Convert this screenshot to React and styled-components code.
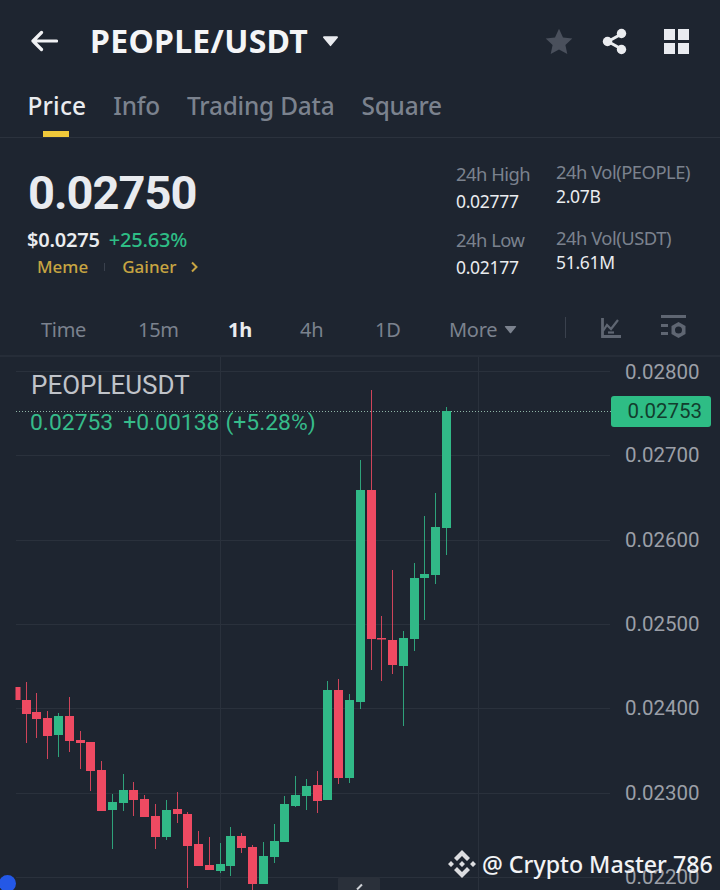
import React from 'react';
import styled, { createGlobalStyle } from 'styled-components';

const Global = createGlobalStyle`
  html, body { margin: 0; padding: 0; background: #1e2530; }
  #root { width: 720px; height: 890px; overflow: hidden; }
`;
const SANS = `"Noto Sans", Roboto, "Liberation Sans", sans-serif`;
const NUM = `Roboto, "Liberation Sans", sans-serif`;

const Page = styled.div`
  width: 720px; height: 890px; background: #1e2530; display: flex; flex-direction: column;
  overflow: hidden; font-family: ${SANS}; color: #eaecef;
`;
const Header = styled.header`
  display: flex; align-items: center; height: 82px; padding: 0 31px 0 31px; box-sizing: border-box;
`;
const Title = styled.h1`
  margin: 0 0 0 32px; font: 700 32px/1 ${SANS}; letter-spacing: 0.3px; color: #f4f5f7; white-space: nowrap;
`;
const HeaderActions = styled.div`
  margin-left: auto; display: flex; align-items: center;
`;
const StarSlot = styled.span`
  display: flex; margin-right: 29px;
`;
const ShareSlot = styled.span`
  display: flex; margin-right: 36px;
`;
const Tabs = styled.nav`
  display: flex; height: 56px; padding-left: 27.5px; gap: 27px; border-bottom: 1px solid #2b323d; box-sizing: border-box;
`;
const Tab = styled.div`
  position: relative; font: 500 24.4px/48px ${SANS};
  letter-spacing: ${p => (p.$active ? '0.2px' : '-0.2px')};
  color: ${p => (p.$active ? '#eaecef' : '#7b828e')};
  ${p => p.$active && `&::after { content: ''; position: absolute; left: 15px; bottom: 0; width: 26px; height: 6px; background: #f0c93a; }`}
`;
const Stats = styled.section`
  display: flex; justify-content: space-between; height: 162px; padding: 27px 28px 0 27px; box-sizing: border-box;
`;
const PriceCol = styled.div`
  display: flex; flex-direction: column;
`;
const BigPrice = styled.div`
  font: 700 47px/56px ${NUM}; color: #e9ebef; letter-spacing: -1px; padding-left: 1px;
`;
const FiatRow = styled.div`
  display: flex; gap: 9px; margin-top: 7px; font: 600 20px/24px ${SANS}; letter-spacing: -0.2px;
`;
const Change = styled.span`
  color: #2ebd85; font-weight: 500;
`;
const TagRow = styled.div`
  display: flex; align-items: center; margin: 3px 0 0 10px; font: 500 17px/24px ${SANS}; color: #c8a542;
`;
const TagSep = styled.i`
  width: 1px; height: 8px; background: #3a414d; margin: 0 17px 0 16px;
`;
const StatGrid = styled.div`
  display: grid; grid-template-columns: 100px 136px; grid-auto-rows: min-content; row-gap: 15px; margin-top: -3px;
`;
const Stat = styled.div`
  display: flex; flex-direction: column; gap: ${p => (p.$lift ? '0' : '3px')}; margin-top: ${p => (p.$lift ? '-2px' : '0')};
`;
const StatLabel = styled.div`
  font: 400 18.4px/24px ${SANS}; color: #7b828e; white-space: nowrap; letter-spacing: -0.5px;
`;
const StatValue = styled.div`
  font: 400 17.5px/24px ${SANS}; color: #eaecef; letter-spacing: -0.3px;
`;
const Frames = styled.div`
  position: relative; height: 57px; display: flex; align-items: center; padding: 4px 0 0 41px; box-sizing: border-box;
  border-bottom: 2px solid #262d38;
  font: 400 20px/24px ${SANS}; color: #7b828e;
`;
const Frame = styled.span`
  width: ${p => p.$w}px; flex: none; color: ${p => (p.$active ? '#eaecef' : '#7b828e')};
  font-weight: ${p => (p.$active ? 700 : 400)};
  letter-spacing: -0.3px;
`;
const MoreButton = styled.span`
  display: flex; align-items: center; gap: 7px; width: 116px; flex: none; letter-spacing: -0.3px;
`;
const VSep = styled.i`
  width: 1px; height: 21px; background: #3a414d; flex: none; margin: 0 35px 4px 0;
`;
const IndicatorSlot = styled.span`
  display: flex; flex: none; margin: 0 40px 4px 0;
`;
const SettingsSlot = styled.span`
  display: flex; flex: none; margin-bottom: 4px;
`;
const Chart = styled.div`
  position: relative; flex: 1; font-family: ${NUM}; overflow: hidden;
`;
const ChartSvg = styled.svg`
  position: absolute; left: 0; top: 0;
`;
const Legend = styled.div`
  position: absolute; left: 30px; top: 12px; display: flex; flex-direction: column;
`;
const Symbol = styled.div`
  font: 400 26px/32px ${NUM}; color: #c0c3c9; margin-left: 1px;
`;
const LegendValues = styled.div`
  display: flex; gap: 10px; margin-top: 9px; font: 400 22.9px/26px ${NUM}; color: #36bb8a;
`;
const LegendPercent = styled.span`
  margin-left: -4px;
`;
const Axis = styled.div`
  position: absolute; left: 625px; top: 0; width: 95px;
`;
const AxisLabel = styled.div`
  position: absolute; left: 0; top: ${p => p.$y - 357 - 12}px;
  font: 400 20.5px/24px ${NUM}; color: #9b9fa7;
`;
const PriceBadge = styled.div`
  position: absolute; left: 611px; top: 39px; width: 100px; height: 31px; border-radius: 3px;
  background: #2ebd85; color: #123d2e; font: 400 20.5px/31px ${NUM}; text-align: right; padding-right: 9px; box-sizing: border-box;
`;
const Watermark = styled.div`
  position: absolute; left: 448px; top: 492px; display: flex; align-items: center; gap: 6px;
  color: #f2f3f5; font: 500 23.2px/30px ${SANS}; white-space: nowrap;
`;
const Dot = styled.div`
  position: absolute; left: -1px; top: 518px; width: 17px; height: 17px; border-radius: 50%; background: #2458e6;
`;
const CollapseTab = styled.div`
  position: absolute; left: 338px; top: 520px; width: 42px; height: 14px; background: #2a303a; border-radius: 2px 2px 0 0;
  &::after { content: ''; position: absolute; left: 18px; top: 9px; width: 7px; height: 2px; background: #cfd2d7; transform: rotate(-45deg); }
`;

const C = [
  ['r',18,687,700,687,700,5],
  ['r',26.5,700,714,682,743],['r',36.5,712,719,693,738],['r',47.5,718,736,711,759],['g',58.5,716,735,713,757],
  ['r',69.5,716,741,697,752],['r',80.5,740,743,731,769],['r',90.5,742,771,742,791],['r',101.5,770,811,761,811],
  ['g',112.5,802,810,794,849],['g',123.5,790,803,774,811],['r',133.5,790,800,782,816],['r',144.5,799,817,795,817],
  ['r',155.5,816,837,804,849],['g',166.5,810,837,800,840],['r',177.5,809,814,792,823],['r',187.5,814,846,812,888],
  ['r',198.5,844,866,831,866],['r',209.5,865,870,837,870],['g',220.5,864,871,843,873],['g',230.5,836,866,827,876],
  ['r',241.5,836,848,833,853],['r',252.5,847,884,845,890],['g',263.5,856,884,842,884],['g',274.5,841,857,824,863],
  ['g',284.5,804,842,796,842],['g',295.5,795,806,776,807],['g',306.5,786,796,779,810],['r',317.5,785,801,771,813],
  ['g',327.5,690,800,681,800],['r',338.5,690,778,679,784],['g',349.5,700,778,694,783],['g',360.5,490,702,460,709],
  ['r',371.5,490,639,390,670],['r',381.5,638,639.5,616,681],['r',392.5,640,665,570,674],['g',403.5,638,666,631,726],
  ['g',414.5,578,639,563,651],['g',424.5,574,578,516,620],['g',435.5,527,575,493,584],['g',446.5,411,528,407,555],
];
const COL = { r: '#ee4a62', g: '#31b987' };
const GRID = [371, 455, 540, 624, 708, 793, 877];
const LABELS = [['0.02800', 372], ['0.02700', 455], ['0.02600', 540], ['0.02500', 624], ['0.02400', 708], ['0.02300', 793], ['0.02200', 877]];

const Candles = () => (
  <ChartSvg width="720" height="533" viewBox="0 357 720 533">
    {GRID.map(y => <rect key={y} x="16" y={y} width="594" height="1" fill="#2a313c" />)}
    <rect x="220" y="357" width="1" height="533" fill="#2a313c" />
    <rect x="478" y="357" width="1" height="533" fill="#2a313c" />
    <line x1="16" x2="611" y1="411.5" y2="411.5" stroke="#8fb5a6" strokeWidth="1" strokeDasharray="1 2" />
    {C.map(([k, x, o, c, h, l, w], i) => (
      <g key={i} fill={COL[k]}>
        <rect x={x - 0.5} y={h} width="1" height={l - h} opacity=".85" />
        <rect x={x - (w || 9) / 2} y={o} width={w || 9} height={c - o} />
      </g>
    ))}
  </ChartSvg>
);

const BackIcon = () => (
  <svg width="27" height="22" viewBox="0 0 27 22" fill="none" stroke="#f0f1f3" strokeWidth="3.2" strokeLinecap="round" strokeLinejoin="round">
    <path d="M2 11H25.5M10.5 2.5L2 11l8.5 8.5" />
  </svg>
);
const Caret = ({ w = 17, h = 12, c = '#e9ebef', ml = 0 }) => (
  <svg width={w} height={h} viewBox="0 0 17 12" style={{ marginLeft: ml }}>
    <path d="M2 1.2h13a1 1 0 0 1 .8 1.6L9.3 10.6a1 1 0 0 1-1.6 0L1.2 2.8A1 1 0 0 1 2 1.2z" fill={c} />
  </svg>
);
const StarIcon = () => (
  <svg width="28" height="27" viewBox="0 0 28 27"><path d="M14 .8l4 8.6 9.3 1.1-6.9 6.4 1.9 9.2L14 21.5l-8.3 4.6 1.9-9.2L.7 10.5 10 9.4z" fill="#4a505c" /></svg>
);
const ShareIcon = () => (
  <svg width="26" height="27" viewBox="0 0 26 27" fill="#eaecef" stroke="#eaecef">
    <path d="M19.5 6L6 13.5l13.5 7.5" fill="none" strokeWidth="3" />
    <circle cx="19.5" cy="5.5" r="4.7" strokeWidth="0" /><circle cx="5.5" cy="13.5" r="4.7" strokeWidth="0" /><circle cx="19.5" cy="21.5" r="4.7" strokeWidth="0" />
  </svg>
);
const GridIcon = () => (
  <svg width="25" height="25" viewBox="0 0 25 25" fill="#e9ebf0">
    <rect x="0" y="0" width="11" height="11" /><rect x="14" y="0" width="11" height="11" />
    <rect x="0" y="14" width="11" height="11" /><rect x="14" y="14" width="11" height="11" />
  </svg>
);
const IndicatorIcon = () => (
  <svg width="20" height="20" viewBox="0 0 20 20" fill="none" stroke="#5f6672" strokeWidth="2.8">
    <path d="M1.5 0v18.5H20" /><path d="M2 13l4-6 4 4 7-9" strokeWidth="2.2" /><path d="M7 14.5h6" strokeWidth="2.2" />
  </svg>
);
const SettingsIcon = () => (
  <svg width="26" height="26" viewBox="0 0 26 26" fill="#5f6672">
    <rect x="0" y="0" width="25" height="3" /><rect x="0" y="9" width="7" height="3" /><rect x="0" y="17" width="7" height="3" />
    <path fillRule="evenodd" d="M17.5 7l7 4v8l-7 4-7-4v-8zM17.5 11.5a3.5 3.5 0 1 0 0 7 3.5 3.5 0 0 0 0-7z" />
  </svg>
);
const BinanceLogo = () => (
  <svg width="28" height="28" viewBox="0 0 28 28" fill="#dcdde0" style={{ flex: 'none' }}>
    <path d="M14 0l8 8-3 3-5-5-5 5-3-3z" />
    <path d="M14 28l8-8-3-3-5 5-5-5-3 3z" />
    <path d="M3 11l3 3-3 3-3-3zM25 11l3 3-3 3-3-3zM14 11l3 3-3 3-3-3z" />
  </svg>
);
const Chevron = () => (
  <svg width="9" height="12" viewBox="0 0 9 12" fill="none" stroke="#c8a542" strokeWidth="2" style={{ marginLeft: 13 }}>
    <path d="M2 1.5L6.5 6 2 10.5" />
  </svg>
);

export default function App() {
  return (
    <Page>
      <Global />
      <Header>
        <BackIcon />
        <Title>PEOPLE/USDT</Title>
        <Caret ml={14} />
        <HeaderActions>
          <StarSlot><StarIcon /></StarSlot>
          <ShareSlot><ShareIcon /></ShareSlot>
          <GridIcon />
        </HeaderActions>
      </Header>
      <Tabs>
        <Tab $active>Price</Tab>
        <Tab>Info</Tab>
        <Tab>Trading Data</Tab>
        <Tab>Square</Tab>
      </Tabs>
      <Stats>
        <PriceCol>
          <BigPrice>0.02750</BigPrice>
          <FiatRow><span>$0.0275</span><Change>+25.63%</Change></FiatRow>
          <TagRow>Meme<TagSep />Gainer<Chevron /></TagRow>
        </PriceCol>
        <StatGrid>
          <Stat><StatLabel>24h High</StatLabel><StatValue>0.02777</StatValue></Stat>
          <Stat $lift><StatLabel>24h Vol(PEOPLE)</StatLabel><StatValue>2.07B</StatValue></Stat>
          <Stat><StatLabel>24h Low</StatLabel><StatValue>0.02177</StatValue></Stat>
          <Stat $lift><StatLabel>24h Vol(USDT)</StatLabel><StatValue>51.61M</StatValue></Stat>
        </StatGrid>
      </Stats>
      <Frames>
        <Frame $w={97}>Time</Frame>
        <Frame $w={90}>15m</Frame>
        <Frame $w={72} $active>1h</Frame>
        <Frame $w={75}>4h</Frame>
        <Frame $w={74}>1D</Frame>
        <MoreButton>More<Caret w={13} h={9} c="#7b828e" /></MoreButton>
        <VSep />
        <IndicatorSlot><IndicatorIcon /></IndicatorSlot>
        <SettingsSlot><SettingsIcon /></SettingsSlot>
      </Frames>
      <Chart>
        <Candles />
        <Legend>
          <Symbol>PEOPLEUSDT</Symbol>
          <LegendValues><span>0.02753</span><span>+0.00138</span><LegendPercent>(+5.28%)</LegendPercent></LegendValues>
        </Legend>
        <Axis>{LABELS.map(([t, y]) => <AxisLabel key={t} $y={y}>{t}</AxisLabel>)}</Axis>
        <PriceBadge>0.02753</PriceBadge>
        <Dot />
        <CollapseTab />
        <Watermark><BinanceLogo />@ Crypto Master 786</Watermark>
      </Chart>
    </Page>
  );
}
